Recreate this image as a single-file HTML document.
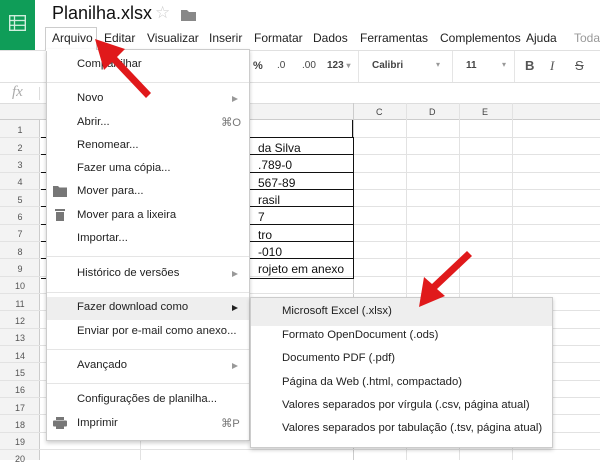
<!DOCTYPE html>
<html><head><meta charset="utf-8"><style>
*{margin:0;padding:0;box-sizing:border-box}
body{width:600px;height:460px;overflow:hidden;background:#fff;font-family:"Liberation Sans",Arial,sans-serif;position:relative;color:#222}
.a{position:absolute;white-space:nowrap}
.mi{position:absolute;left:77px;font-size:11.3px;color:#222}
.sc{position:absolute;font-size:11.3px;color:#777}
.tri{position:absolute;left:232px;width:0;height:0;border-left:6px solid #999;border-top:3.5px solid transparent;border-bottom:3.5px solid transparent}
.sep{position:absolute;left:47px;width:202px;height:1px;background:#e5e5e5}
.smi{position:absolute;left:282px;font-size:11.3px;color:#222}
.hl{position:absolute;background:#eee}
.rn{position:absolute;left:0;width:40px;text-align:center;font-size:9px;color:#555}
.hline{position:absolute;left:0;width:600px;height:1px;background:#e2e2e2}
.vline{position:absolute;top:103px;width:1px;height:357px;background:#e2e2e2}
.cell{position:absolute;left:258px;font-size:12px;color:#111}
.mb{position:absolute;top:31px;font-size:12px}
</style></head><body>
<div class="a" style="left:0;top:0;width:35px;height:50px;background:#0f9d58"></div>
<svg class="a" style="left:9px;top:15px" width="17" height="16" viewBox="0 0 17 16"><rect x="0.7" y="0.7" width="15.6" height="14.6" fill="none" stroke="#cfeedd" stroke-width="1.4"/><line x1="1" y1="5.5" x2="16" y2="5.5" stroke="#cfeedd" stroke-width="1.3"/><line x1="1" y1="10.3" x2="16" y2="10.3" stroke="#cfeedd" stroke-width="1.3"/><line x1="5.5" y1="1" x2="5.5" y2="15" stroke="#cfeedd" stroke-width="1.3"/></svg>
<div class="a" style="left:52px;top:3px;font-size:18px;color:#111">Planilha.xlsx</div>
<div class="a" style="left:155px;top:3px;font-size:17px;color:#ccc">☆</div>
<svg class="a" style="left:181px;top:9px" width="15" height="12"><path d="M0 1h6l2 2h7v9H0z" fill="#888"/></svg>
<div class="a" style="left:45px;top:27px;width:52px;height:24px;border:1px solid #ccc;border-bottom:none;background:#fff"></div>
<div class="mb" style="left:52px">Arquivo</div>
<div class="mb" style="left:104px">Editar</div>
<div class="mb" style="left:147px">Visualizar</div>
<div class="mb" style="left:209px">Inserir</div>
<div class="mb" style="left:254px">Formatar</div>
<div class="mb" style="left:313px">Dados</div>
<div class="mb" style="left:360px">Ferramentas</div>
<div class="mb" style="left:440px">Complementos</div>
<div class="mb" style="left:526px">Ajuda</div>
<div class="mb" style="left:574px;color:#999">Todas</div>
<div class="a" style="left:0;top:50px;width:600px;height:33px;border-top:1px solid #e0e0e0;border-bottom:1px solid #e0e0e0;background:#fff"></div>
<div class="a" style="left:253px;top:60px;font-size:11px;font-weight:bold;color:#444">%</div>
<div class="a" style="left:277px;top:60px;font-size:10px;color:#444">.0</div>
<div class="a" style="left:302px;top:60px;font-size:10px;color:#444">.00</div>
<div class="a" style="left:327px;top:60px;font-size:10px;color:#444;font-weight:bold">123 <span style="color:#999;font-size:8px">▾</span></div>
<div class="a" style="left:358px;top:51px;width:1px;height:31px;background:#e5e5e5"></div>
<div class="a" style="left:372px;top:60px;font-size:10px;font-weight:bold;color:#444">Calibri</div>
<div class="a" style="left:436px;top:60px;font-size:8px;color:#999">▾</div>
<div class="a" style="left:452px;top:51px;width:1px;height:31px;background:#e5e5e5"></div>
<div class="a" style="left:466px;top:60px;font-size:10px;font-weight:bold;color:#444">11</div>
<div class="a" style="left:502px;top:60px;font-size:8px;color:#999">▾</div>
<div class="a" style="left:514px;top:51px;width:1px;height:31px;background:#e5e5e5"></div>
<div class="a" style="left:525px;top:58px;font-size:13px;font-weight:bold;color:#555">B</div>
<div class="a" style="left:550px;top:58px;font-size:13px;font-style:italic;color:#555;font-family:'Liberation Serif',serif">I</div>
<div class="a" style="left:575px;top:58px;font-size:13px;color:#555;text-decoration:line-through">S</div>
<div class="a" style="left:12px;top:84px;font-size:15px;font-style:italic;color:#aaa;font-family:'Liberation Serif',serif">fx</div>
<div class="a" style="left:39px;top:87px;width:1px;height:13px;background:#ddd"></div>
<div class="a" style="left:0;top:103px;width:600px;height:17px;background:#f3f3f3;border-top:1px solid #ddd;border-bottom:1px solid #ccc"></div>
<div class="a" style="left:0;top:120px;width:40px;height:340px;background:#f3f3f3;border-right:1px solid #ccc"></div>
<div class="a" style="left:376px;top:107px;font-size:9px;color:#444">C</div>
<div class="a" style="left:429px;top:107px;font-size:9px;color:#444">D</div>
<div class="a" style="left:482px;top:107px;font-size:9px;color:#444">E</div>
<div class="vline" style="left:140px"></div>
<div class="vline" style="left:406px"></div>
<div class="vline" style="left:459px"></div>
<div class="vline" style="left:512px"></div>
<div class="vline" style="left:353px;background:#ccc"></div>
<div class="hline" style="top:137px"></div><div class="hline" style="top:154px"></div><div class="hline" style="top:172px"></div><div class="hline" style="top:189px"></div><div class="hline" style="top:206px"></div><div class="hline" style="top:224px"></div><div class="hline" style="top:241px"></div><div class="hline" style="top:258px"></div><div class="hline" style="top:276px"></div><div class="hline" style="top:293px"></div><div class="hline" style="top:310px"></div><div class="hline" style="top:328px"></div><div class="hline" style="top:345px"></div><div class="hline" style="top:362px"></div><div class="hline" style="top:380px"></div><div class="hline" style="top:397px"></div><div class="hline" style="top:414px"></div><div class="hline" style="top:432px"></div><div class="hline" style="top:449px"></div>
<div class="rn" style="top:125px">1</div><div class="rn" style="top:143px">2</div><div class="rn" style="top:160px">3</div><div class="rn" style="top:177px">4</div><div class="rn" style="top:195px">5</div><div class="rn" style="top:212px">6</div><div class="rn" style="top:229px">7</div><div class="rn" style="top:247px">8</div><div class="rn" style="top:264px">9</div><div class="rn" style="top:281px">10</div><div class="rn" style="top:299px">11</div><div class="rn" style="top:316px">12</div><div class="rn" style="top:333px">13</div><div class="rn" style="top:351px">14</div><div class="rn" style="top:368px">15</div><div class="rn" style="top:385px">16</div><div class="rn" style="top:403px">17</div><div class="rn" style="top:420px">18</div><div class="rn" style="top:437px">19</div><div class="rn" style="top:454px">20</div>
<div class="a" style="left:41px;top:137px;width:313px;height:142px;border:1px solid #111;border-left:none"></div>
<div class="a" style="left:352px;top:120px;width:1px;height:18px;background:#111"></div>
<div class="a" style="left:41px;top:154px;width:312px;height:1px;background:#111"></div><div class="a" style="left:41px;top:172px;width:312px;height:1px;background:#111"></div><div class="a" style="left:41px;top:189px;width:312px;height:1px;background:#111"></div><div class="a" style="left:41px;top:206px;width:312px;height:1px;background:#111"></div><div class="a" style="left:41px;top:224px;width:312px;height:1px;background:#111"></div><div class="a" style="left:41px;top:241px;width:312px;height:1px;background:#111"></div><div class="a" style="left:41px;top:258px;width:312px;height:1px;background:#111"></div>
<div class="cell" style="top:141px">da Silva</div><div class="cell" style="top:158px">.789-0</div><div class="cell" style="top:176px">567-89</div><div class="cell" style="top:193px">rasil</div><div class="cell" style="top:210px">7</div><div class="cell" style="top:228px">tro</div><div class="cell" style="top:245px">-010</div><div class="cell" style="top:262px">rojeto em anexo</div>
<div class="a" style="left:46px;top:49px;width:204px;height:392px;background:#fff;border:1px solid #ccc;box-shadow:0 2px 4px rgba(0,0,0,.2)"></div>
<div class="a" style="left:46px;top:49px;width:50px;height:2px;background:#fff"></div>
<div class="mi" style="top:58px">Compartilhar</div>
<div class="sep" style="top:82px"></div>
<div class="mi" style="top:92px">Novo</div><div class="tri" style="top:96px"></div>
<div class="mi" style="top:116px">Abrir...</div><div class="sc" style="left:221px;top:116px">⌘O</div>
<div class="mi" style="top:139px">Renomear...</div>
<div class="mi" style="top:162px">Fazer uma cópia...</div>
<svg class="a" style="left:53px;top:186px" width="14" height="11"><path d="M0 0h5l1.5 1.5H14V11H0z" fill="#777"/></svg>
<div class="mi" style="top:185px">Mover para...</div>
<svg class="a" style="left:55px;top:208px" width="10" height="13"><rect x="0" y="1" width="10" height="2" fill="#777"/><rect x="1" y="4" width="8" height="9" fill="#777"/></svg>
<div class="mi" style="top:209px">Mover para a lixeira</div>
<div class="mi" style="top:232px">Importar...</div>
<div class="sep" style="top:256px"></div>
<div class="mi" style="top:267px">Histórico de versões</div><div class="tri" style="top:271px"></div>
<div class="sep" style="top:292px"></div>
<div class="hl" style="left:47px;top:297px;width:202px;height:23px"></div>
<div class="mi" style="top:301px">Fazer download como</div><div class="tri" style="top:305px;border-left-color:#222"></div>
<div class="mi" style="top:325px">Enviar por e-mail como anexo...</div>
<div class="sep" style="top:349px"></div>
<div class="mi" style="top:359px">Avançado</div><div class="tri" style="top:363px"></div>
<div class="sep" style="top:383px"></div>
<div class="mi" style="top:393px">Configurações de planilha...</div>
<svg class="a" style="left:53px;top:417px" width="14" height="12"><rect x="3" y="0" width="8" height="3" fill="#777"/><rect x="0" y="3.5" width="14" height="6" rx="1" fill="#777"/><rect x="3" y="8" width="8" height="4" fill="#777"/></svg>
<div class="mi" style="top:417px">Imprimir</div><div class="sc" style="left:221px;top:417px">⌘P</div>
<div class="a" style="left:250px;top:297px;width:303px;height:151px;background:#fff;border:1px solid #ccc;box-shadow:0 2px 4px rgba(0,0,0,.2)"></div>
<div class="hl" style="left:251px;top:298px;width:301px;height:28px"></div>
<div class="smi" style="top:305px">Microsoft Excel (.xlsx)</div>
<div class="smi" style="top:329px">Formato OpenDocument (.ods)</div>
<div class="smi" style="top:352px">Documento PDF (.pdf)</div>
<div class="smi" style="top:376px">Página da Web (.html, compactado)</div>
<div class="smi" style="top:399px">Valores separados por vírgula (.csv, página atual)</div>
<div class="smi" style="top:422px">Valores separados por tabulação (.tsv, página atual)</div>
<svg class="a" style="left:0;top:0" width="600" height="460">
<g fill="#e0191b">
<path d="M95 39 L125 49 L117 57 L151 93 L146 98 L112 62 L104 70 Z"/>
<path d="M419 307 L424 277 L432 284 L467 251 L472 256 L437 289 L445 296 Z"/>
</g></svg>
</body></html>
